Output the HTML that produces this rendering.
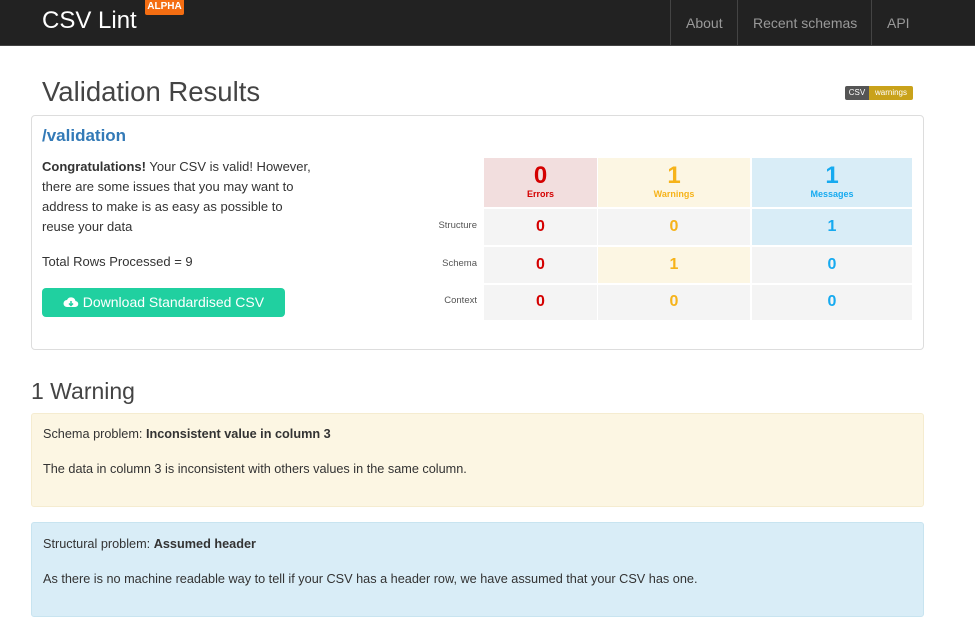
<!DOCTYPE html>
<html><head><style>
*{margin:0;padding:0;box-sizing:border-box}
body{width:975px;height:628px;overflow:hidden;background:#fff;font-family:"Liberation Sans",sans-serif;color:#333;position:relative}
.a{position:absolute}
.nav{left:0;top:0;width:975px;height:46px;background:#222;border-bottom:1px solid #444}
.cell{position:absolute;text-align:center;font-weight:bold;font-size:16px}
.r{color:#d40000}.y{color:#f6b31a}.b{color:#16aaf0}
</style></head><body>
<div class="a nav"></div>
<div class="a" style="left:42px;top:7px;font-size:24px;color:#fff">CSV Lint</div>
<div class="a" style="left:145px;top:0;width:39px;height:15px;background:#f46d12;color:#fff;font-size:10px;font-weight:bold;text-align:center;line-height:13px;border-radius:0 0 2px 2px">ALPHA</div>
<div class="a" style="left:670px;top:0;width:1px;height:46px;background:#444"></div>
<div class="a" style="left:737px;top:0;width:1px;height:46px;background:#444"></div>
<div class="a" style="left:871px;top:0;width:1px;height:46px;background:#444"></div>
<div class="a" style="left:686px;top:15px;font-size:14px;color:#999">About</div>
<div class="a" style="left:753px;top:15px;font-size:14px;color:#999">Recent schemas</div>
<div class="a" style="left:887px;top:15px;font-size:14px;color:#999">API</div>

<div class="a" style="left:42px;top:76px;font-size:27.5px;color:#444">Validation Results</div>
<div class="a" style="left:845px;top:86px;width:68px;height:14px;border-radius:2px;overflow:hidden;font-size:8px;line-height:14px;color:#fff;display:flex"><span style="background:#555;width:24px;text-align:center">CSV</span><span style="background:#c9a21a;flex:1;text-align:center">warnings</span></div>

<div class="a" style="left:31px;top:115px;width:893px;height:235px;border:1px solid #ddd;border-radius:4px"></div>
<div class="a" style="left:42px;top:126px;font-size:17px;font-weight:bold;color:#337ab7">/validation</div>
<div class="a" style="left:42px;top:157px;width:272px;font-size:13px;line-height:20px"><b>Congratulations!</b> Your CSV is valid! However, there are some issues that you may want to address to make is as easy as possible to reuse your data</div>
<div class="a" style="left:42px;top:254px;font-size:13px">Total Rows Processed = 9</div>
<div class="a" style="left:42px;top:288px;width:243px;height:29px;background:#20d0a0;border-radius:4px;color:#fff;font-size:14px;line-height:29px;text-align:center"><svg width="16" height="12" viewBox="0 0 16 12" style="vertical-align:-1px"><path d="M4 11a3.5 3.5 0 0 1 0-7 4.5 4.5 0 0 1 8.5 1A3 3 0 0 1 12 11z" fill="#fff"/><path d="M8 5v4M6 7.5l2 2 2-2" stroke="#20d0a0" stroke-width="1.5" fill="none"/></svg> Download Standardised CSV</div>

<div class="a" style="left:484px;top:158px;width:113px;height:49px;background:#f2dede"></div>
<div class="a" style="left:598px;top:158px;width:152px;height:49px;background:#fcf6e3"></div>
<div class="a" style="left:752px;top:158px;width:160px;height:49px;background:#d9edf7"></div>
<div class="cell r" style="left:484px;top:162px;width:113px;font-size:24px">0</div>
<div class="cell y" style="left:598px;top:162px;width:152px;font-size:24px">1</div>
<div class="cell b" style="left:752px;top:162px;width:160px;font-size:24px">1</div>
<div class="cell r" style="left:484px;top:189px;width:113px;font-size:9px">Errors</div>
<div class="cell y" style="left:598px;top:189px;width:152px;font-size:9px">Warnings</div>
<div class="cell b" style="left:752px;top:189px;width:160px;font-size:9px">Messages</div>

<div class="a" style="left:484px;top:209px;width:113px;height:36px;background:#f4f4f4"></div>
<div class="a" style="left:598px;top:209px;width:152px;height:36px;background:#f4f4f4"></div>
<div class="a" style="left:752px;top:209px;width:160px;height:36px;background:#d9edf7"></div>
<div class="a" style="left:484px;top:247px;width:113px;height:36px;background:#f4f4f4"></div>
<div class="a" style="left:598px;top:247px;width:152px;height:36px;background:#fcf6e3"></div>
<div class="a" style="left:752px;top:247px;width:160px;height:36px;background:#f4f4f4"></div>
<div class="a" style="left:484px;top:285px;width:113px;height:35px;background:#f4f4f4"></div>
<div class="a" style="left:598px;top:285px;width:152px;height:35px;background:#f4f4f4"></div>
<div class="a" style="left:752px;top:285px;width:160px;height:35px;background:#f4f4f4"></div>

<div class="a" style="left:400px;top:220px;width:77px;text-align:right;font-size:9.5px;color:#555">Structure</div>
<div class="a" style="left:400px;top:258px;width:77px;text-align:right;font-size:9.5px;color:#555">Schema</div>
<div class="a" style="left:400px;top:295px;width:77px;text-align:right;font-size:9.5px;color:#555">Context</div>
<div class="cell r" style="left:484px;top:218px;width:113px">0</div>
<div class="cell y" style="left:598px;top:218px;width:152px">0</div>
<div class="cell b" style="left:752px;top:218px;width:160px">1</div>
<div class="cell r" style="left:484px;top:256px;width:113px">0</div>
<div class="cell y" style="left:598px;top:256px;width:152px">1</div>
<div class="cell b" style="left:752px;top:256px;width:160px">0</div>
<div class="cell r" style="left:484px;top:293px;width:113px">0</div>
<div class="cell y" style="left:598px;top:293px;width:152px">0</div>
<div class="cell b" style="left:752px;top:293px;width:160px">0</div>

<div class="a" style="left:31px;top:378px;font-size:23px;color:#444">1 Warning</div>
<div class="a" style="left:31px;top:413px;width:893px;height:94px;background:#fcf6e3;border:1px solid #f5ecd0;border-radius:3px"></div>
<div class="a" style="left:43px;top:427px;font-size:12.7px">Schema problem: <b>Inconsistent value in column 3</b></div>
<div class="a" style="left:43px;top:462px;font-size:12.7px">The data in column 3 is inconsistent with others values in the same column.</div>
<div class="a" style="left:31px;top:522px;width:893px;height:95px;background:#d9edf7;border:1px solid #c8e4f0;border-radius:3px"></div>
<div class="a" style="left:43px;top:537px;font-size:12.7px">Structural problem: <b>Assumed header</b></div>
<div class="a" style="left:43px;top:572px;font-size:12.7px">As there is no machine readable way to tell if your CSV has a header row, we have assumed that your CSV has one.</div>
</body></html>
